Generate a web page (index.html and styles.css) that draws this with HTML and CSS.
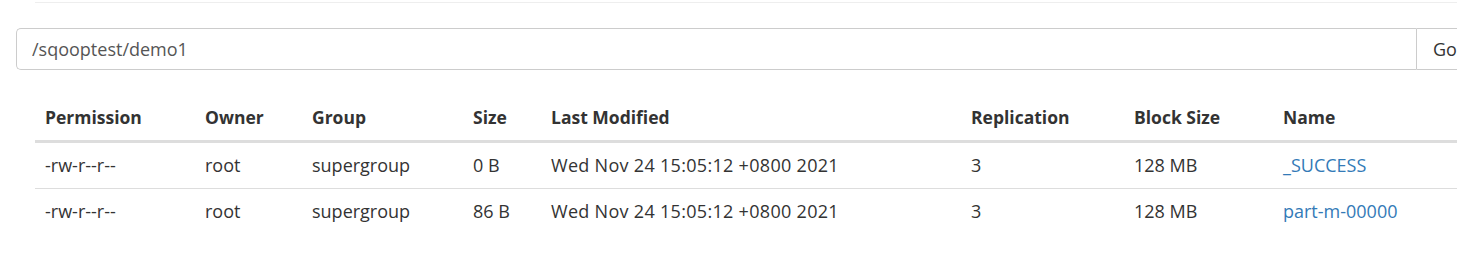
FILE: index.html
```html
<!DOCTYPE html>
<html>
<head>
<meta charset="utf-8">
<link rel="stylesheet" href="styles.css">
</head>
<body>
<div class="page">
  <div class="topline"></div>
  <div class="search">
    <input class="path" type="text" value="/sqooptest/demo1">
    <button class="go">Go!</button>
  </div>
  <table class="files">
    <colgroup>
      <col class="c-perm"><col class="c-owner"><col class="c-group"><col class="c-size">
      <col class="c-mod"><col class="c-rep"><col class="c-block"><col class="c-name">
    </colgroup>
    <thead>
      <tr><th>Permission</th><th>Owner</th><th>Group</th><th>Size</th><th>Last Modified</th><th>Replication</th><th>Block Size</th><th>Name</th></tr>
    </thead>
    <tbody>
      <tr><td>-rw-r--r--</td><td>root</td><td>supergroup</td><td>0 B</td><td class="date">Wed Nov 24 15:05:12 +0800 2021</td><td>3</td><td>128 MB</td><td><a href="#">_SUCCESS</a></td></tr>
      <tr><td>-rw-r--r--</td><td>root</td><td>supergroup</td><td>86 B</td><td class="date">Wed Nov 24 15:05:12 +0800 2021</td><td>3</td><td>128 MB</td><td><a href="#">part-m-00000</a></td></tr>
    </tbody>
  </table>
</div>
</body>
</html>
```

FILE: styles.css
```css
html, body {
  margin: 0;
  padding: 0;
  overflow: hidden;
  background: #fff;
}
body {
  font-family: "Open Sans", "Noto Sans", sans-serif;
  font-size: 17.5px;
  line-height: 25px;
  color: #333;
}
.page {
  width: 1600px;
}
.topline {
  margin-left: 35px;
  margin-top: 2px;
  border-top: 1px solid #eee;
  height: 0;
}
.search {
  display: flex;
  margin-top: 25px;
  margin-left: 16px;
}
.path {
  width: 1400px;
  box-sizing: border-box;
  height: 42px;
  padding: 0 15px;
  border: 1px solid #ccc;
  border-right: none;
  border-radius: 5px 0 0 5px;
  font: inherit;
  font-size: 18px;
  color: #555;
  outline: none;
}
.go {
  height: 42px;
  padding: 0 16px;
  border: 1px solid #ccc;
  border-radius: 0 5px 5px 0;
  background: #fff;
  font: inherit;
  font-size: 18px;
  color: #333;
}
.files {
  margin-top: 25px;
  margin-left: 35px;
  border-collapse: collapse;
  border-spacing: 0;
  table-layout: fixed;
  width: 1500px;
}
.c-perm { width: 160px; }
.c-owner { width: 107px; }
.c-group { width: 161px; }
.c-size { width: 78px; }
.c-mod { width: 420px; }
.c-rep { width: 163px; }
.c-block { width: 149px; }
.c-name { width: auto; }
.files th {
  text-align: left;
  font-weight: 700;
  padding: 10px;
  border-bottom: 3px solid #ddd;
}
.files td {
  padding: 10px;
  font-size: 18px;
  border-top: 1px solid #ddd;
}
.files td.date {
  letter-spacing: 0.3px;
}
.files tbody tr:first-child td {
  border-top: none;
}
.files a {
  color: #337ab7;
  text-decoration: none;
}
```
